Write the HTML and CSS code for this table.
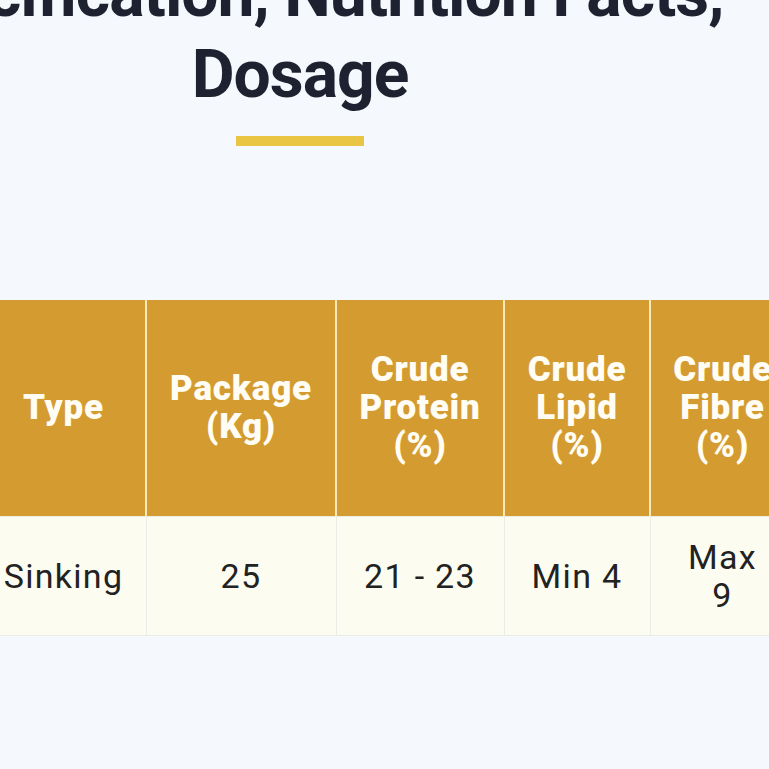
FILE: index.html
```html
<!DOCTYPE html>
<html lang="en">
<head>
<meta charset="utf-8">
<title>Specification, Nutrition Facts, Dosage</title>
<link rel="stylesheet" href="styles.css">
</head>
<body>
<section class="spec">
  <header class="spec-head">
    <h1 class="spec-title"><span class="line">Specification, Nutrition Facts,</span><span class="line">Dosage</span></h1>
    <div class="spec-bar"></div>
  </header>
  <div class="table-scroll">
    <table class="spec-table">
      <colgroup>
        <col class="c-type"><col class="c-pack"><col class="c-prot"><col class="c-lip"><col class="c-fib"><col class="c-more">
      </colgroup>
      <thead>
        <tr>
          <th>Type</th>
          <th>Package<br>(Kg)</th>
          <th>Crude<br>Protein<br>(%)</th>
          <th>Crude<br>Lipid<br>(%)</th>
          <th>Crude<br>Fibre<br>(%)</th>
          <th>Dosage<br>(%)</th>
        </tr>
      </thead>
      <tbody>
        <tr>
          <td>Sinking</td>
          <td>25</td>
          <td>21 - 23</td>
          <td>Min 4</td>
          <td>Max<br>9</td>
          <td>3 - 5</td>
        </tr>
      </tbody>
    </table>
  </div>
</section>
</body>
</html>
```
FILE: styles.css
```css
html, body {
  margin: 0;
  padding: 0;
}
body {
  background: #f5f8fc;
  font-family: Roboto, "Noto Sans", sans-serif;
  color: #1e2130;
  overflow: hidden;
}
.spec {
  width: 600px;
}
.spec-head {
  display: flex;
  flex-direction: column;
  align-items: center;
}
.spec-title {
  margin: -47px 0 0;
  font-size: 66px;
  line-height: 81px;
  font-weight: 700;
  letter-spacing: -1px;
  color: #1e2130;
  display: flex;
  flex-direction: column;
  align-items: center;
  width: 600px;
  white-space: nowrap;
}
.spec-title .line {
  display: block;
}
.spec-bar {
  margin-top: 21px;
  width: 128px;
  height: 10px;
  background: #eac544;
}
.table-scroll {
  margin-top: 154px;
  margin-left: -20px;
  width: 1100px;
}
.spec-table {
  border-collapse: collapse;
  table-layout: fixed;
  width: 960px;
}
.c-type { width: 165px; }
.c-pack { width: 190px; }
.c-prot { width: 168px; }
.c-lip { width: 146px; }
.c-fib { width: 145px; }
.c-more { width: 146px; }
.spec-table th {
  background: #d49c30;
  color: #fffdf4;
  font-size: 35px;
  line-height: 38px;
  font-weight: 900;
  letter-spacing: 0.8px;
  text-align: center;
  padding: 51px 2px;
  border-left: 2px solid #fbeab8;
  border-right: 2px solid #fbeab8;
  height: 114px;
}
.spec-table td {
  background: #fcfdf0;
  color: #222222;
  font-size: 34px;
  line-height: 38px;
  font-weight: 400;
  letter-spacing: 1.3px;
  text-align: center;
  padding: 21px 2px;
  border: 1px solid #ebece6;
}
```
